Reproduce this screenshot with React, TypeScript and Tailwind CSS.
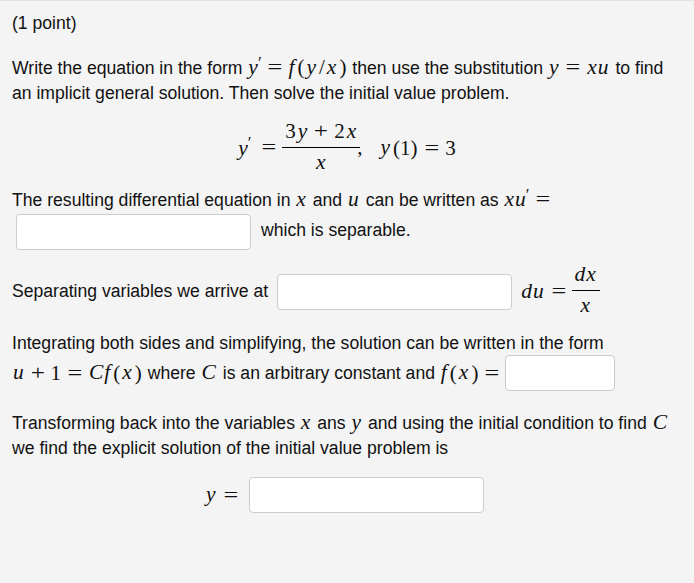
import React from "react";

const M = ({ children }: { children: React.ReactNode }) => (
  <span className="font-['Liberation_Serif',serif] italic text-[21.5px] leading-none tracking-[1px] px-[1px]">
    {children}
  </span>
);

const R = ({ children }: { children: React.ReactNode }) => (
  <span className="font-['Liberation_Serif',serif] not-italic text-[21px] leading-none px-[1px]">{children}</span>
);

const Eq = () => (
  <span className="inline-block font-['Liberation_Serif',serif] text-[21px] leading-none mx-[7px] scale-x-[1.25]">
    =
  </span>
);

const Plus = () => (
  <span className="inline-block font-['Liberation_Serif',serif] text-[21px] leading-none mx-[6px] scale-x-[1.2]">
    +
  </span>
);

const Prime = () => (
  <span className="font-['Liberation_Serif',serif] text-[17px] leading-none relative -top-[6px] -ml-[2px]">′</span>
);

const Box = ({ w = "w-[235px]" }: { w?: string }) => (
  <span
    className={`inline-block ${w} h-[36px] bg-white border border-[#cccccc] rounded-[4px] align-middle`}
  />
);

const Frac = ({ num, den }: { num: React.ReactNode; den: React.ReactNode }) => (
  <span className="inline-flex flex-col items-center align-middle">
    <span className="px-[2px] border-b border-black leading-[29px]">{num}</span>
    <span className="px-[2px] leading-[31px]">{den}</span>
  </span>
);

const App = () => {
  return (
    <div className="w-[694px] h-[583px] bg-[#f4f4f4] border-t border-[#e2e2e2] text-[#111] font-['Liberation_Sans',Arial,sans-serif] text-[17.6px] px-3 pt-[10px]">
      <p className="leading-[24px]">(1 point)</p>

      <p className="mt-[21px] leading-[25px] whitespace-nowrap">
        Write the equation in the form <M>y</M>
        <Prime />
        <Eq />
        <M>f</M>
        <R>(</R>
        <M>y</M>
        <R>/</R>
        <M>x</M>
        <R>)</R> then use the substitution <M>y</M>
        <Eq />
        <M>xu</M> to find
        <br />
        an implicit general solution. Then solve the initial value problem.
      </p>

      <div className="mt-[12px] flex justify-center items-center">
        <M>y</M>
        <Prime />
        <span className="ml-[5px]">
          <Eq />
        </span>
        <Frac
          num={
            <>
              <R>3</R>
              <M>y</M>
              <Plus />
              <R>2</R>
              <M>x</M>
            </>
          }
          den={<M>x</M>}
        />
        <span className="-ml-[4px]">
          <R>,</R>
        </span>
        <span className="ml-[16px]">
          <M>y</M>
        </span>
        <R>(1)</R>
        <Eq />
        <R>3</R>
      </div>

      <p className="mt-[9px] leading-[25px] whitespace-nowrap">
        The resulting differential equation in <M>x</M> and <M>u</M> can be written as <M>xu</M>
        <Prime />
        <Eq />
      </p>
      <div className="mt-[1px] pl-1 flex items-center gap-[10px]">
        <Box />
        <span className="-mt-[4px]">which is separable.</span>
      </div>

      <div className="mt-[11px] flex items-center">
        <span>Separating variables we arrive at</span>
        <span className="ml-[9px]">
          <Box />
        </span>
        <span className="ml-[8px] flex items-center">
          <M>du</M>
          <Eq />
          <Frac num={<M>dx</M>} den={<M>x</M>} />
        </span>
      </div>

      <p className="mt-[9px] leading-[25px] whitespace-nowrap">
        Integrating both sides and simplifying, the solution can be written in the form
      </p>
      <div className="-mt-[1px] flex items-center whitespace-nowrap">
        <M>u</M>
        <Plus />
        <R>1</R>
        <Eq />
        <M>Cf</M>
        <R>(</R>
        <M>x</M>
        <R>)</R>
        <span>{"\u00a0where\u00a0"}</span>
        <M>C</M>
        <span>{"\u00a0is an arbitrary constant and\u00a0"}</span>
        <M>f</M>
        <R>(</R>
        <M>x</M>
        <R>)</R>
        <Eq />
        <Box w="w-[110px]" />
      </div>

      <p className="mt-[20px] leading-[25px] whitespace-nowrap">
        Transforming back into the variables <M>x</M> ans <M>y</M> and using the initial condition to find{" "}
        <M>C</M>
        <br />
        we find the explicit solution of the initial value problem is
      </p>

      <div className="mt-[16px] flex items-center pl-[193px]">
        <M>y</M>
        <Eq />
        <span className="ml-[6px]">
          <Box />
        </span>
      </div>
    </div>
  );
};

export default App;
